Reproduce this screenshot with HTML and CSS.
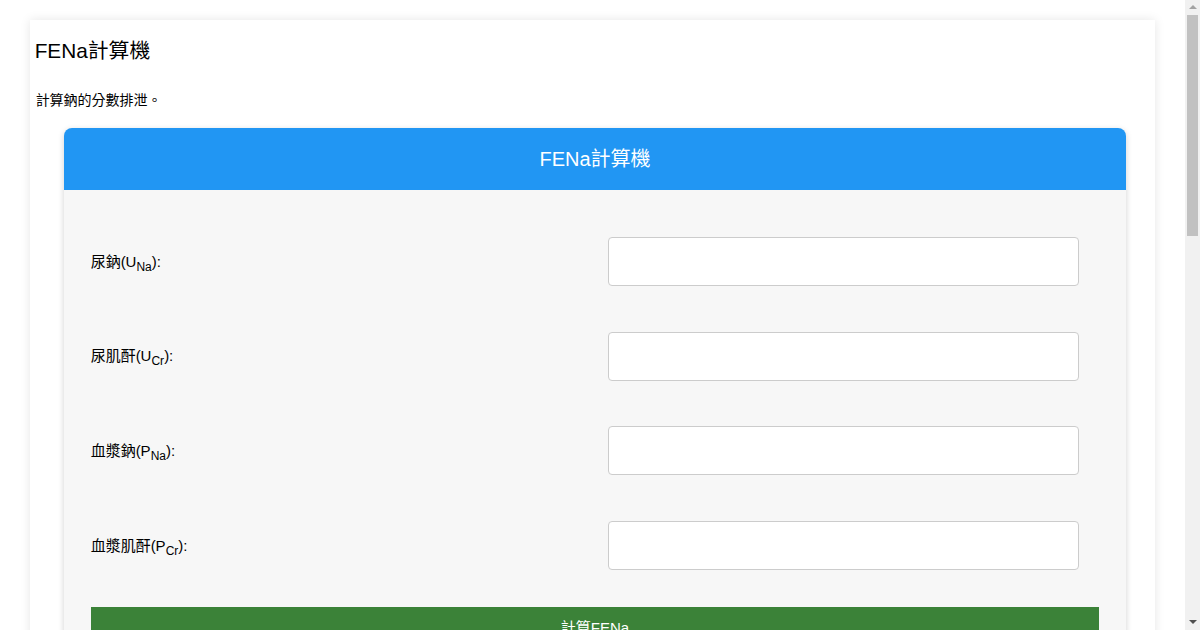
FILE: index.html
```html
<!DOCTYPE html>
<html lang="zh-Hant">
<head>
<meta charset="utf-8">
<title>FENa計算機</title>
<link rel="stylesheet" href="styles.css">
</head>
<body>
<div class="page">
  <h1 class="page-title">FENa計算機</h1>
  <p class="page-desc">計算鈉的分數排泄。</p>
  <div class="calc">
    <div class="calc-header">FENa計算機</div>
    <div class="calc-body">
      <div class="rows">
        <div class="row">
          <label class="row-label" for="una">尿鈉(U<sub>Na</sub>):</label>
          <input class="row-input" id="una" type="number">
        </div>
        <div class="row">
          <label class="row-label" for="ucr">尿肌酐(U<sub>Cr</sub>):</label>
          <input class="row-input" id="ucr" type="number">
        </div>
        <div class="row">
          <label class="row-label" for="pna">血漿鈉(P<sub>Na</sub>):</label>
          <input class="row-input" id="pna" type="number">
        </div>
        <div class="row">
          <label class="row-label" for="pcr">血漿肌酐(P<sub>Cr</sub>):</label>
          <input class="row-input" id="pcr" type="number">
        </div>
      </div>
      <button class="calc-btn" type="button">計算FENa</button>
      <div class="result">FENa: --</div>
    </div>
  </div>
  <div class="info">
    <h2 class="info-title">關於FENa</h2>
    <p class="info-text">鈉的分數排泄（FENa）是指經腎臟過濾後排入尿液中的鈉所佔的百分比。</p>
    <p class="info-text">FENa = (U<sub>Na</sub> × P<sub>Cr</sub>) / (P<sub>Na</sub> × U<sub>Cr</sub>) × 100%</p>
    <p class="info-text">FENa &lt; 1% 提示腎前性急性腎損傷；FENa &gt; 2% 提示急性腎小管壞死。</p>
  </div>
</div>
<div class="scrollbar" aria-hidden="true">
  <span class="sb-arrow sb-up"></span>
  <span class="sb-thumb"></span>
  <span class="sb-arrow sb-down"></span>
</div>
</body>
</html>
```

FILE: styles.css
```css
html, body {
  margin: 0;
  padding: 0;
  background: #ffffff;
}

body {
  font-family: "Liberation Sans", "Noto Sans CJK TC", Arial, sans-serif;
  color: #000;
  width: calc(100% - 15px);
}

.page {
  box-sizing: border-box;
  width: 95%;
  margin: 20px auto;
  padding: 5px 5px 60px;
  background: #fff;
  box-shadow: 0 0 10px rgba(0, 0, 0, 0.1);
  min-height: 1500px;
}

.page-title {
  font-size: 20.8px;
  font-weight: normal;
  line-height: 24px;
  margin: 14px 0 0;
}

.page-desc {
  font-size: 14px;
  line-height: 16px;
  margin: 29px 0 20px 1px;
}

.calc {
  margin: 0 24px 0 29px;
  border-radius: 8px;
  background: #f7f7f7;
  box-shadow: 0 2px 6px rgba(0, 0, 0, 0.18);
}

.calc-header {
  background: #2196f3;
  color: #fff;
  font-size: 20px;
  height: 62px;
  line-height: 62px;
  text-align: center;
  border-radius: 8px 8px 0 0;
}

.calc-body {
  padding: 47px 27px 30px;
}

.rows {
  display: flex;
  flex-direction: column;
  gap: 45.7px;
}

.row {
  display: grid;
  grid-template-columns: 1fr 471px;
  align-items: center;
  padding-right: 20px;
}

.row-label {
  font-size: 15px;
}

.row-label sub {
  font-size: 12px;
}

.row-input {
  box-sizing: border-box;
  width: 471px;
  height: 49px;
  border: 1px solid #cccccc;
  border-radius: 4px;
  background: #fff;
  font-size: 15px;
  padding: 0 10px;
}

.calc-btn {
  display: block;
  width: 100%;
  height: 42px;
  margin-top: 37px;
  border: none;
  background: #3b8238;
  color: #fff;
  font-family: inherit;
  font-size: 15px;
  padding: 0;
  line-height: 42px;
}

.result {
  margin-top: 24px;
  font-size: 16px;
  text-align: center;
}

.info {
  margin: 40px 29px 0;
}

.info-title {
  font-size: 18px;
  font-weight: normal;
}

.info-text {
  font-size: 14px;
  line-height: 22px;
}

/* drawn scrollbar overlay */
.scrollbar {
  position: fixed;
  top: 0;
  right: 0;
  width: 15px;
  height: 100%;
  background: #f1f1f1;
  display: flex;
  flex-direction: column;
  align-items: center;
}

.sb-arrow {
  flex: none;
  width: 15px;
  height: 15px;
  position: relative;
}

.sb-arrow::after {
  content: "";
  position: absolute;
  left: 3.5px;
  width: 0;
  height: 0;
  border-left: 4px solid transparent;
  border-right: 4px solid transparent;
}

.sb-up::after {
  top: 5px;
  border-bottom: 4px solid #a3a3a3;
}

.sb-down {
  margin-top: auto;
}

.sb-down::after {
  top: 5px;
  border-top: 4px solid #505050;
}

.sb-thumb {
  flex: none;
  width: 11px;
  height: 221px;
  background: #c1c1c1;
  margin-top: 0;
}
```
